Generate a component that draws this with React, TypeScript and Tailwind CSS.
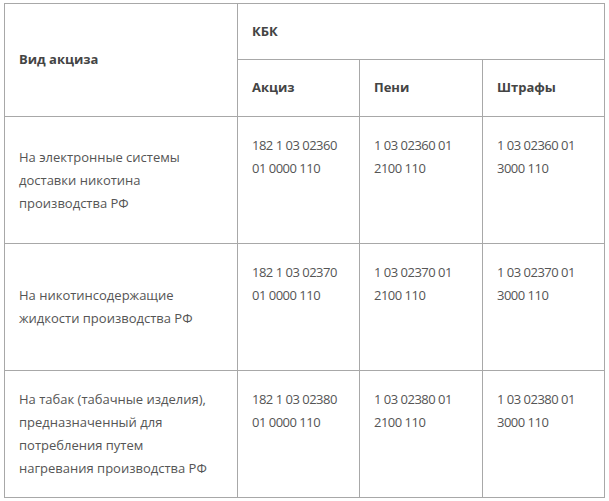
import React from "react";

export default function App() {
  const rows: { name: React.ReactNode; a: string; p: string; s: string }[] = [
    {
      name: "На электронные системы доставки никотина производства РФ",
      a: "182 1 03 02360 01 0000 110",
      p: "1 03 02360 01 2100 110",
      s: "1 03 02360 01 3000 110",
    },
    {
      name: "На никотинсодержащие жидкости производства РФ",
      a: "182 1 03 02370 01 0000 110",
      p: "1 03 02370 01 2100 110",
      s: "1 03 02370 01 3000 110",
    },
    {
      name: (
        <>
          На табак (табачные изделия), предназначенный для потребления путем
          <br />
          нагревания производства РФ
        </>
      ),
      a: "182 1 03 02380 01 0000 110",
      p: "1 03 02380 01 2100 110",
      s: "1 03 02380 01 3000 110",
    },
  ];
  const th = "border border-[#a8a8a8] px-[14px] text-left font-bold text-[#444] align-middle";
  const td = "border border-[#a8a8a8] px-[14px] text-[#555] leading-[23px]";
  const code = td + " align-top pt-[17px] tracking-[-0.5px]";
  return (
    <div className="bg-white w-[609px] h-[501px] pt-[3px] pl-[4px] font-['Open_Sans',sans-serif] text-[13px]">
      <table className="table-fixed border-collapse w-[601px]">
        <colgroup>
          <col className="w-[233px]" />
          <col className="w-[122px]" />
          <col className="w-[123px]" />
          <col className="w-[122px]" />
        </colgroup>
        <thead>
          <tr className="h-[56px]">
            <th rowSpan={2} className={th}>Вид акциза</th>
            <th colSpan={3} className={th}>КБК</th>
          </tr>
          <tr className="h-[57px]">
            <th className={th}>Акциз</th>
            <th className={th}>Пени</th>
            <th className={th}>Штрафы</th>
          </tr>
        </thead>
        <tbody>
          {rows.map((r) => (
            <tr key={r.a} className="h-[127px]">
              <td className={td + " align-middle"}>{r.name}</td>
              <td className={code}>{r.a}</td>
              <td className={code}>{r.p}</td>
              <td className={code}>{r.s}</td>
            </tr>
          ))}
        </tbody>
      </table>
    </div>
  );
}
